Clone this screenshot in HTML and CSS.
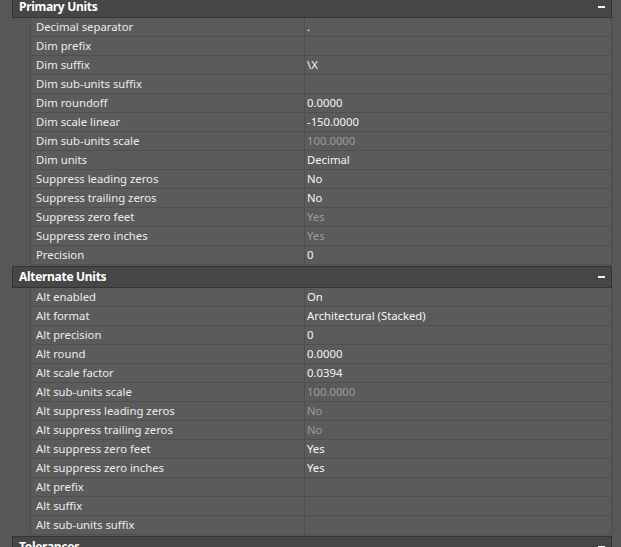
FILE: index.html
```html
<!DOCTYPE html>
<html>
<head>
<meta charset="utf-8">
<link rel="stylesheet" href="styles.css">
</head>
<body>
<div class="panel">
  <section class="section">
    <div class="section-header"><span>Primary Units</span><span class="collapse"></span></div>
    <div class="rows">
      <div class="row"><div class="label">Decimal separator</div><div class="value">.</div></div>
      <div class="row"><div class="label">Dim prefix</div><div class="value"></div></div>
      <div class="row"><div class="label">Dim suffix</div><div class="value">\X</div></div>
      <div class="row"><div class="label">Dim sub-units suffix</div><div class="value"></div></div>
      <div class="row"><div class="label">Dim roundoff</div><div class="value">0.0000</div></div>
      <div class="row"><div class="label">Dim scale linear</div><div class="value">-150.0000</div></div>
      <div class="row"><div class="label">Dim sub-units scale</div><div class="value disabled">100.0000</div></div>
      <div class="row"><div class="label">Dim units</div><div class="value">Decimal</div></div>
      <div class="row"><div class="label">Suppress leading zeros</div><div class="value">No</div></div>
      <div class="row"><div class="label">Suppress trailing zeros</div><div class="value">No</div></div>
      <div class="row"><div class="label">Suppress zero feet</div><div class="value disabled">Yes</div></div>
      <div class="row"><div class="label">Suppress zero inches</div><div class="value disabled">Yes</div></div>
      <div class="row"><div class="label">Precision</div><div class="value">0</div></div>
    </div>
  </section>
  <section class="section">
    <div class="section-header"><span>Alternate Units</span><span class="collapse"></span></div>
    <div class="rows">
      <div class="row"><div class="label">Alt enabled</div><div class="value">On</div></div>
      <div class="row"><div class="label">Alt format</div><div class="value">Architectural (Stacked)</div></div>
      <div class="row"><div class="label">Alt precision</div><div class="value">0</div></div>
      <div class="row"><div class="label">Alt round</div><div class="value">0.0000</div></div>
      <div class="row"><div class="label">Alt scale factor</div><div class="value">0.0394</div></div>
      <div class="row"><div class="label">Alt sub-units scale</div><div class="value disabled">100.0000</div></div>
      <div class="row"><div class="label">Alt suppress leading zeros</div><div class="value disabled">No</div></div>
      <div class="row"><div class="label">Alt suppress trailing zeros</div><div class="value disabled">No</div></div>
      <div class="row"><div class="label">Alt suppress zero feet</div><div class="value">Yes</div></div>
      <div class="row"><div class="label">Alt suppress zero inches</div><div class="value">Yes</div></div>
      <div class="row"><div class="label">Alt prefix</div><div class="value"></div></div>
      <div class="row"><div class="label">Alt suffix</div><div class="value"></div></div>
      <div class="row"><div class="label">Alt sub-units suffix</div><div class="value"></div></div>
    </div>
  </section>
  <section class="section">
    <div class="section-header"><span>Tolerances</span><span class="collapse"></span></div>
  </section>
</div>
</body>
</html>
```

FILE: styles.css
```css
html, body {
  margin: 0;
  padding: 0;
  height: 100%;
  overflow: hidden;
}
body {
  background: #575757;
  font-family: "Noto Sans", "Open Sans", sans-serif;
  font-size: 11.3px;
  color: #ececec;
}
.panel {
  margin-top: -4px;
  padding-left: 12px;
  width: 600px;
}
.section {
  margin-bottom: 1px;
}
.section-header {
  box-sizing: border-box;
  height: 22px;
  background: #464646;
  border: 1px solid #333333;
  display: flex;
  align-items: center;
  justify-content: space-between;
  padding: 0 6px 2px 6px;
  font-size: 12px;
  letter-spacing: -0.3px;
  font-weight: bold;
  color: #ffffff;
}
.collapse {
  width: 7px;
  height: 2px;
  margin-top: 2px;
  background: #f4f4f4;
}
.rows {
  margin-left: 18px;
  border-left: 1px solid #4b4b4b;
  border-right: 1px solid #4b4b4b;
  background: #5b5b5b;
}
.row {
  box-sizing: border-box;
  height: 19px;
  display: grid;
  grid-template-columns: 274px 1fr;
  border-bottom: 1px solid #4f4f4f;
  line-height: 17px;
}
.label {
  padding-left: 5px;
  border-right: 1px solid #4f4f4f;
  white-space: nowrap;
  overflow: hidden;
}
.value {
  padding-left: 2px;
  color: #f6f6f6;
  white-space: nowrap;
}
.value.disabled {
  color: #9c9c9c;
}
```
